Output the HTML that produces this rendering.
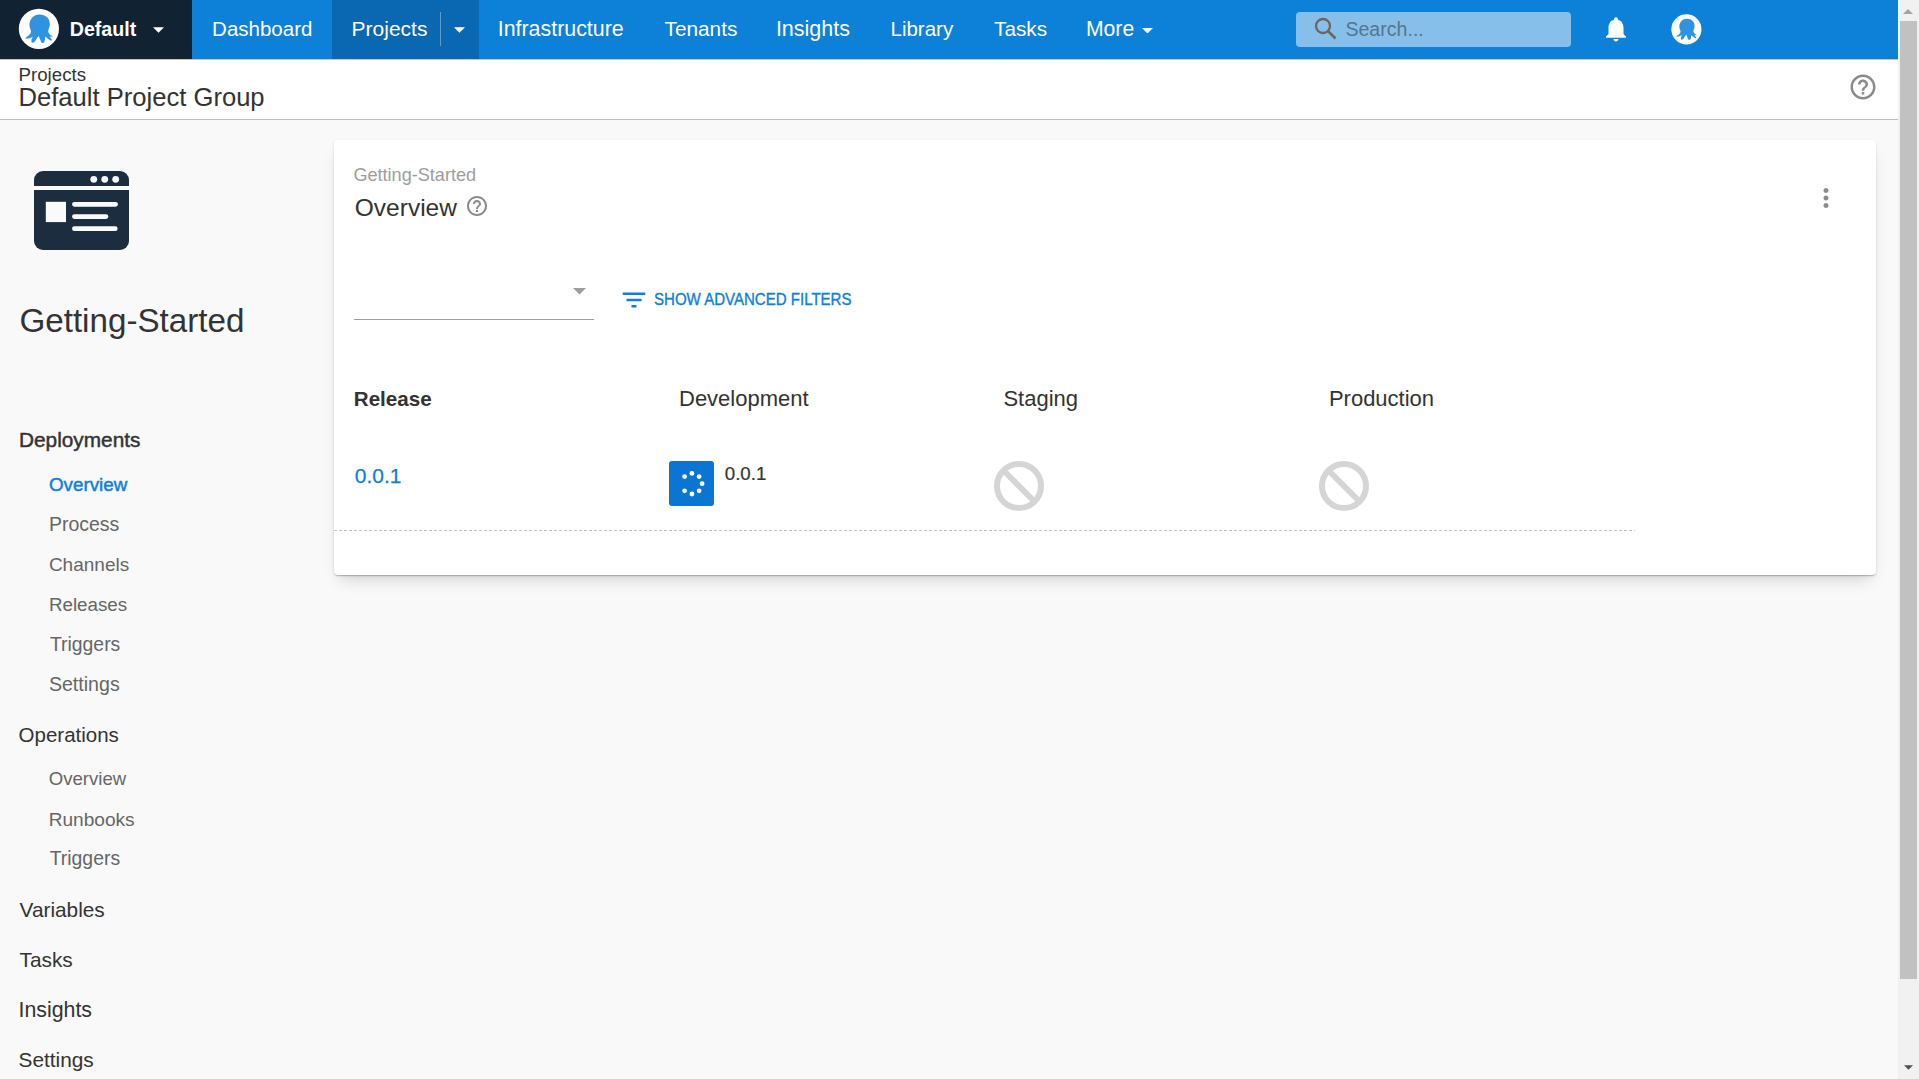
<!DOCTYPE html>
<html><head><meta charset="utf-8">
<style>
*{box-sizing:border-box;margin:0;padding:0}
html,body{width:1919px;height:1079px;overflow:hidden;background:#f9f9f9;font-family:"Liberation Sans", sans-serif;color:#333}
.abs{position:absolute}
.t{position:absolute;line-height:0;white-space:nowrap}
#nav{position:absolute;left:0;top:0;width:1898px;height:59px;background:#0d80d8}
#space{position:absolute;left:0;top:0;width:192px;height:59px;background:#112233}
#act{position:absolute;left:332px;top:0;width:147px;height:59px;background:#0a67b1}
#sep{position:absolute;left:439.5px;top:12px;width:1px;height:34px;background:rgba(255,255,255,0.35)}
#hdr{position:absolute;left:0;top:59px;width:1898px;height:61px;background:#fff;border-bottom:1px solid #bebebe}
#search{position:absolute;left:1296px;top:12px;width:275px;height:35px;border-radius:4px;background:#87bfeb}
#sb{position:absolute;left:1898px;top:0;width:21px;height:1079px;background:#f1f1f1}
#thumb{position:absolute;left:1900px;top:21px;width:17px;height:958px;background:#c1c1c1}
#card{position:absolute;left:334px;top:140px;width:1542px;height:435px;background:#fff;border-radius:4px;box-shadow:0 1px 1px rgba(0,0,0,.08),0 2px 1px -1px rgba(0,0,0,.12),0 1px 3px rgba(0,0,0,.10),0 9px 16px -6px rgba(0,0,0,.18)}
#uline{position:absolute;left:354px;top:319px;width:240px;height:1px;background:#9e9e9e}
#dash{position:absolute;left:334px;top:530px;width:1301px;height:1px;background-image:linear-gradient(to right,#c4c4c4 0,#c4c4c4 3px,transparent 3px);background-size:5px 1px}
#devbox{position:absolute;left:669px;top:461px;width:45px;height:45px;border-radius:3px;background:#0b75d3}
</style></head><body>
<div id="nav"></div>
<div id="space"></div>
<div id="act"></div>
<div id="sep"></div>
<svg class="abs" style="left:17px;top:7px;width:44px;height:44px" viewBox="0 0 1079 1079"><circle cx="537" cy="535" r="493" fill="#fff"/><path d="M555 185C700 185 815 290 805 430C800 500 765 555 765 600C768 655 830 695 872 718C878 728 860 735 840 730C820 726 800 718 790 712C810 740 840 770 855 800C862 818 850 830 830 822C780 800 730 760 695 718C690 770 690 830 660 870C645 890 615 890 600 870C575 830 560 770 530 712C490 760 455 830 420 862C400 880 365 880 355 858C345 830 365 780 385 728C330 760 270 780 215 775C200 773 205 760 215 752C270 710 340 670 345 610C340 560 310 520 305 450C300 300 410 185 555 185Z" fill="#2f93e0"/></svg>
<svg class="abs" style="left:153px;top:27px;width:11px;height:6px" viewBox="0 0 10 5"><path d="M0 0L10 0L5 5Z" fill="#fff"/></svg>
<svg class="abs" style="left:454px;top:27px;width:11px;height:6px" viewBox="0 0 10 5"><path d="M0 0L10 0L5 5Z" fill="#fff"/></svg>
<svg class="abs" style="left:1142px;top:27.5px;width:11px;height:5.5px" viewBox="0 0 10 5"><path d="M0 0L10 0L5 5Z" fill="#fff"/></svg>
<div id="search"></div>
<svg class="abs" style="left:1312px;top:15px;width:28px;height:28px" viewBox="0 0 28 28"><circle cx="11" cy="11" r="7" fill="none" stroke="#6e6460" stroke-width="2.3"/><path d="M16 16L23.5 23.5" stroke="#6e6460" stroke-width="2.6"/></svg>
<svg class="abs" style="left:1601px;top:14px;width:30px;height:30px" viewBox="0 0 24 24"><path fill="#fff" d="M12 22c1.1 0 2-.9 2-2h-4c0 1.1.89 2 2 2zm6-6v-5c0-3.07-1.64-5.64-4.5-6.32V4c0-.83-.67-1.5-1.5-1.5s-1.5.67-1.5 1.5v.68C7.63 5.36 6 7.920 6 11v5l-2 2v1h16v-1l-2-2z"/></svg>
<svg class="abs" style="left:1670px;top:13.2px;width:33px;height:33px" viewBox="0 0 1079 1079"><circle cx="537" cy="535" r="493" fill="#fff"/><path d="M555 185C700 185 815 290 805 430C800 500 765 555 765 600C768 655 830 695 872 718C878 728 860 735 840 730C820 726 800 718 790 712C810 740 840 770 855 800C862 818 850 830 830 822C780 800 730 760 695 718C690 770 690 830 660 870C645 890 615 890 600 870C575 830 560 770 530 712C490 760 455 830 420 862C400 880 365 880 355 858C345 830 365 780 385 728C330 760 270 780 215 775C200 773 205 760 215 752C270 710 340 670 345 610C340 560 310 520 305 450C300 300 410 185 555 185Z" fill="#2f93e0"/></svg>
<div id="hdr"></div>
<div class="abs" style="left:0;top:59px;width:1898px;height:1px;background:#c8c4c0"></div>
<svg class="abs" style="left:1848px;top:71.7px;width:30px;height:30px" viewBox="0 0 24 24"><path fill="#8a8a8a" d="M11 18h2v-2h-2v2zm1-16C6.48 2 2 6.48 2 12s4.48 10 10 10 10-4.48 10-10S17.52 2 12 2zm0 18c-4.41 0-8-3.59-8-8s3.59-8 8-8 8 3.59 8 8-3.59 8-8 8zm0-14c-2.21 0-4 1.79-4 4h2c0-1.1.9-2 2-2s2 .9 2 2c0 2-3 1.75-3 5h2c0-2.25 3-2.5 3-5 0-2.21-1.79-4-4-4z"/></svg>
<svg class="abs" style="left:34px;top:171px;width:95px;height:79px" viewBox="0 0 95 79">
<path d="M9 0H86A9 9 0 0 1 95 9V15H0V9A9 9 0 0 1 9 0Z" fill="#1b2d3e"/>
<path d="M0 19H95V70A9 9 0 0 1 86 79H9A9 9 0 0 1 0 70Z" fill="#1b2d3e"/>
<circle cx="59.75" cy="8.3" r="3.4" fill="#fafafa"/><circle cx="70.75" cy="8.3" r="3.4" fill="#fafafa"/><circle cx="81.7" cy="8.3" r="3.4" fill="#fafafa"/>
<rect x="11.8" y="30.8" width="20.2" height="20.3" fill="#fafafa"/>
<path d="M40.4 33.3H81.6M40.4 45.6H72M40.4 57.7H81.3" stroke="#fafafa" stroke-width="4.7" stroke-linecap="round"/>
</svg>
<div id="card"></div>
<svg class="abs" style="left:465px;top:193.6px;width:24px;height:24px" viewBox="0 0 24 24"><path fill="#8a8a8a" d="M11 18h2v-2h-2v2zm1-16C6.48 2 2 6.48 2 12s4.48 10 10 10 10-4.48 10-10S17.52 2 12 2zm0 18c-4.41 0-8-3.59-8-8s3.59-8 8-8 8 3.59 8 8-3.59 8-8 8zm0-14c-2.21 0-4 1.79-4 4h2c0-1.1.9-2 2-2s2 .9 2 2c0 2-3 1.75-3 5h2c0-2.25 3-2.5 3-5 0-2.21-1.79-4-4-4z"/></svg>
<svg class="abs" style="left:1811px;top:183px;width:30px;height:30px" viewBox="0 0 24 24"><path fill="#8c8c8c" d="M12 8c1.1 0 2-.9 2-2s-.9-2-2-2-2 .9-2 2 .9 2 2 2zm0 2c-1.1 0-2 .9-2 2s.9 2 2 2 2-.9 2-2-.9-2-2-2zm0 6c-1.1 0-2 .9-2 2s.9 2 2 2 2-.9 2-2-.9-2-2-2z"/></svg>
<div id="uline"></div>
<svg class="abs" style="left:572.6px;top:288px;width:13px;height:6.5px" viewBox="0 0 10 5"><path d="M0 0L10 0L5 5Z" fill="#9e9e9e"/></svg>
<svg class="abs" style="left:619px;top:285px;width:30px;height:30px" viewBox="0 0 24 24"><path fill="#0d80d8" d="M10 18h4v-2h-4v2zM3 6v2h18V6H3zm3 7h12v-2H6v2z"/></svg>
<div id="devbox"></div>
<svg class="abs" style="left:669px;top:461px;width:45px;height:45px" viewBox="0 0 45 45" fill="#fff">
<circle cx="22.9" cy="12.4" r="2.4"/><circle cx="30.1" cy="15.6" r="2.4"/><circle cx="33.1" cy="22.7" r="2.4"/><circle cx="30.1" cy="29.8" r="2.4"/><circle cx="22.9" cy="33" r="2.4"/><circle cx="15.6" cy="29.8" r="2.4"/><circle cx="15.6" cy="15.6" r="2.4"/>
</svg>
<svg class="abs" style="left:994px;top:461px;width:50px;height:50px" viewBox="0 0 50 50"><circle cx="25" cy="25" r="22" fill="none" stroke="#d5d5d5" stroke-width="6"/><path d="M10 10L40 40" stroke="#d5d5d5" stroke-width="6"/></svg>
<svg class="abs" style="left:1319px;top:461px;width:50px;height:50px" viewBox="0 0 50 50"><circle cx="25" cy="25" r="22" fill="none" stroke="#d5d5d5" stroke-width="6"/><path d="M10 10L40 40" stroke="#d5d5d5" stroke-width="6"/></svg>
<div id="dash"></div>
<div class="t" id="t0" style="left:69.80px;top:29.01px;font-size:19.6px;font-weight:700;color:#fff;">Default</div>
<div class="t" id="t1" style="left:212.10px;top:29.01px;font-size:20.5px;font-weight:400;color:#fff;">Dashboard</div>
<div class="t" id="t2" style="left:351.60px;top:29.00px;font-size:21px;font-weight:400;color:#fff;">Projects</div>
<div class="t" id="t3" style="left:497.70px;top:29.00px;font-size:21.4px;font-weight:400;color:#fff;">Infrastructure</div>
<div class="t" id="t4" style="left:664.50px;top:29.01px;font-size:20.8px;font-weight:400;color:#fff;">Tenants</div>
<div class="t" id="t5" style="left:775.90px;top:29.01px;font-size:21.5px;font-weight:400;color:#fff;">Insights</div>
<div class="t" id="t6" style="left:890.50px;top:29.01px;font-size:20.5px;font-weight:400;color:#fff;">Library</div>
<div class="t" id="t7" style="left:994.00px;top:29.01px;font-size:20.8px;font-weight:400;color:#fff;">Tasks</div>
<div class="t" id="t8" style="left:1085.90px;top:29.01px;font-size:21.2px;font-weight:400;color:#fff;">More</div>
<div class="t" id="t9" style="left:1345.40px;top:29.01px;font-size:19.6px;font-weight:400;color:#56758d;">Search...</div>
<div class="t" id="t10" style="left:18.50px;top:75.01px;font-size:18.7px;font-weight:400;color:#333;">Projects</div>
<div class="t" id="t11" style="left:18.50px;top:97.01px;font-size:25.6px;font-weight:400;color:#333;">Default Project Group</div>
<div class="t" id="t12" style="left:19.40px;top:321.01px;font-size:33.2px;font-weight:400;color:#333;">Getting-Started</div>
<div class="t" id="t13" style="left:353.40px;top:175.01px;font-size:18.1px;font-weight:400;color:#9e9e9e;">Getting-Started</div>
<div class="t" id="t14" style="left:354.80px;top:208.01px;font-size:24.5px;font-weight:400;color:#333;">Overview</div>
<div class="t" id="t15" style="left:654.00px;top:300.01px;font-size:16px;font-weight:400;color:#0d80d8;-webkit-text-stroke:0.35px #0d80d8;transform:scaleX(0.94);transform-origin:0 0;">SHOW ADVANCED FILTERS</div>
<div class="t" id="t16" style="left:353.80px;top:399.01px;font-size:20.6px;font-weight:700;color:#333;">Release</div>
<div class="t" id="t17" style="left:679.00px;top:399.01px;font-size:22px;font-weight:400;color:#333;">Development</div>
<div class="t" id="t18" style="left:1003.40px;top:399.00px;font-size:22px;font-weight:400;color:#333;">Staging</div>
<div class="t" id="t19" style="left:1328.90px;top:399.00px;font-size:22px;font-weight:400;color:#333;">Production</div>
<div class="t" id="t20" style="left:354.80px;top:476.00px;font-size:21px;font-weight:400;color:#0d80d8;-webkit-text-stroke:0.25px #0d80d8;">0.0.1</div>
<div class="t" id="t21" style="left:724.75px;top:474.00px;font-size:18.7px;font-weight:400;color:#333;-webkit-text-stroke:0.2px #333;">0.0.1</div>
<div class="t" id="t22" style="left:19.00px;top:440.01px;font-size:20.8px;font-weight:400;color:#333;-webkit-text-stroke:0.45px #333;">Deployments</div>
<div class="t" id="t23" style="left:49.00px;top:485.01px;font-size:18.8px;font-weight:400;color:#0d80d8;-webkit-text-stroke:0.45px #0d80d8;">Overview</div>
<div class="t" id="t24" style="left:48.90px;top:524.01px;font-size:19.5px;font-weight:400;color:#666;">Process</div>
<div class="t" id="t25" style="left:48.90px;top:565.00px;font-size:19.0px;font-weight:400;color:#666;">Channels</div>
<div class="t" id="t26" style="left:48.90px;top:605.00px;font-size:18.8px;font-weight:400;color:#666;">Releases</div>
<div class="t" id="t27" style="left:49.90px;top:644.00px;font-size:19.4px;font-weight:400;color:#666;">Triggers</div>
<div class="t" id="t28" style="left:48.90px;top:684.01px;font-size:19.6px;font-weight:400;color:#666;">Settings</div>
<div class="t" id="t29" style="left:18.60px;top:735.01px;font-size:20.5px;font-weight:400;color:#333;">Operations</div>
<div class="t" id="t30" style="left:48.70px;top:779.01px;font-size:18.6px;font-weight:400;color:#666;">Overview</div>
<div class="t" id="t31" style="left:48.70px;top:820.00px;font-size:19.1px;font-weight:400;color:#666;">Runbooks</div>
<div class="t" id="t32" style="left:49.70px;top:858.01px;font-size:19.4px;font-weight:400;color:#666;">Triggers</div>
<div class="t" id="t33" style="left:19.60px;top:910.01px;font-size:20.8px;font-weight:400;color:#333;">Variables</div>
<div class="t" id="t34" style="left:19.60px;top:960.01px;font-size:20.8px;font-weight:400;color:#333;">Tasks</div>
<div class="t" id="t35" style="left:18.60px;top:1010.01px;font-size:21.3px;font-weight:400;color:#333;">Insights</div>
<div class="t" id="t36" style="left:18.60px;top:1060.01px;font-size:20.8px;font-weight:400;color:#333;">Settings</div>
<div id="sb"></div>
<div id="thumb"></div>
<svg class="abs" style="left:1903px;top:9px;width:10px;height:5px" viewBox="0 0 10 5"><path d="M0 5L10 5L5 0Z" fill="#a3a3a3"/></svg>
<svg class="abs" style="left:1904px;top:1065px;width:9px;height:5px" viewBox="0 0 10 5"><path d="M0 0L10 0L5 5Z" fill="#505050"/></svg>
</body></html>
